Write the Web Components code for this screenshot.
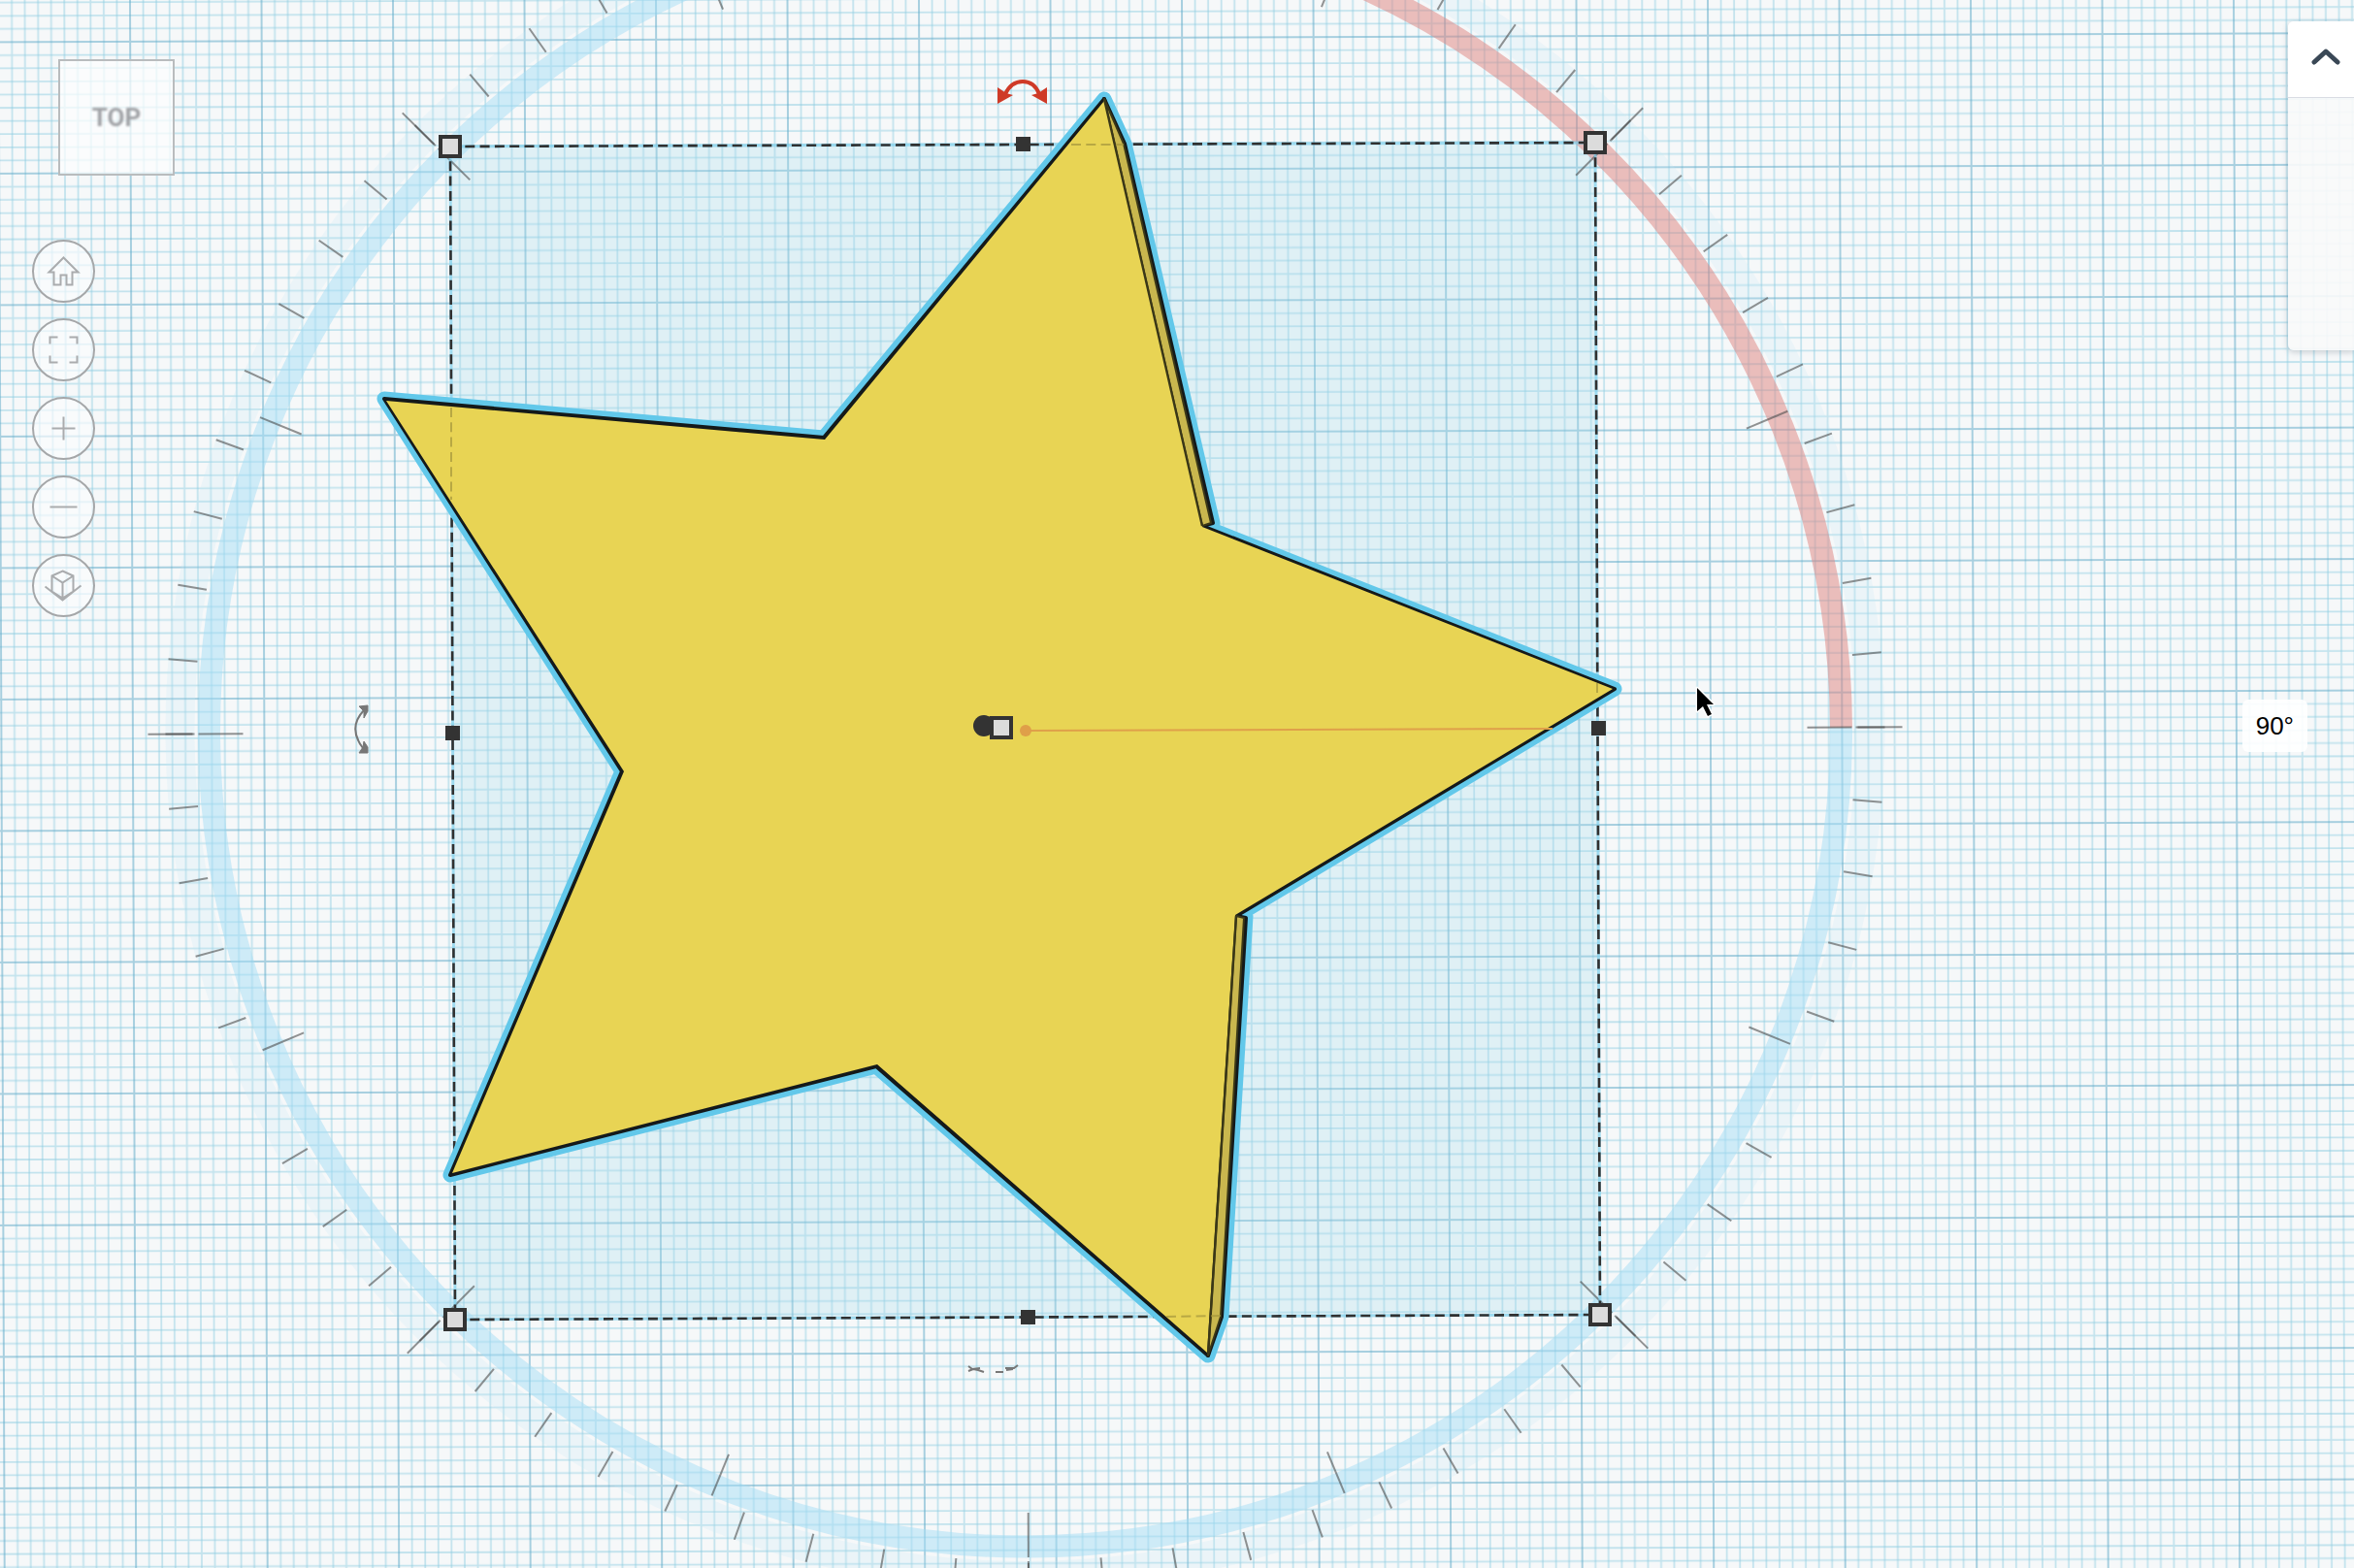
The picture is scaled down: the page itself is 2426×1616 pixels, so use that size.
<!DOCTYPE html>
<html lang="en">
<head>
<meta charset="utf-8">
<title>Workplane</title>
<style>
  html, body {
    height: 100%;
    margin: 0;
  }
  body {
    overflow: hidden;
    font-family: "Liberation Sans", Arial, sans-serif;
  }
</style>
</head>
<body>
<editor-app></editor-app>

<template id="scene-template">
<style>
  :host {
    display: block;
    width: 100%;
    height: 100%;
  }
  svg {
    display: block;
    width: 100%;
    height: 100%;
  }
  .minor { stroke: #8fcde2; stroke-opacity: 0.5; stroke-width: 1.8; }
  .major { stroke: #66acc9; stroke-opacity: 0.55; stroke-width: 2; fill: none; }
  .ring { fill: none; stroke: #a6def6; stroke-opacity: 0.5; stroke-width: 23; }
  .ring.active { stroke: #de8682; stroke-opacity: 0.52; }
  .halo { fill: none; stroke: #c4e9f8; stroke-opacity: 0.22; stroke-width: 30; }
  .ticks line { stroke: #4c4c4c; stroke-opacity: 0.6; stroke-width: 2; }
  .area { fill: #a3d9ec; fill-opacity: 0.27; }
  .dash-glow { fill: none; stroke: #7fd0ec; stroke-opacity: 0.7; stroke-width: 3; }
  .dash { fill: none; stroke: #303030; stroke-width: 2.6; stroke-dasharray: 10 5.3; }
  .glow { fill: #62c8ea; stroke: #62c8ea; stroke-width: 15; stroke-linejoin: round; }
  .edge { stroke: #14191a; stroke-width: 4; stroke-linejoin: round; }
  .top { fill: #e8d454; }
  .side { fill: #c9b74e; stroke: #3a3717; stroke-width: 2; stroke-linejoin: round; }
  .hidden-dash { stroke: #a4963c; stroke-opacity: 0.7; stroke-width: 2; stroke-dasharray: 10 5.3; }
  .corner { fill: #dcdcdc; stroke: #333; stroke-width: 4; }
  .mid { fill: #333; }
</style>
<svg viewBox="0 0 2426 1616" preserveAspectRatio="xMidYMid slice" role="img" aria-label="Star on the workplane">
  <defs>
    <pattern id="grid" width="135.5" height="135.5" patternUnits="userSpaceOnUse" patternTransform="rotate(-0.22) translate(-1.5 43.4)">
      <g class="minor"></g>
      <path class="major" d="M0 0H135.5M0 135.5H135.5M0 0V135.5M135.5 0V135.5"/>
    </pattern>
  </defs>
  <rect width="2426" height="1616" fill="#f6f8f9"/>
  <rect width="2426" height="1616" fill="url(#grid)"/>

  <polygon class="area" points="464,151 1644,147 1649,1355 469,1360"/>

  <!-- rotation protractor -->
  <g transform="translate(1056.5 753) rotate(-0.23)">
    <circle class="halo" r="871"/>
    <path class="ring" d="M841 0A841 841 0 1 1 0 -841"/>
    <path class="ring active" d="M841 0A841 841 0 0 0 0 -841"/>
    <g class="ticks"></g>
  </g>

  <polygon class="dash-glow" points="464,151 1644,147 1649,1355 469,1360"/>
  <path class="dash" d="M464 151L1644 147M464 151L469 1360M469 1360L1649 1355M1644 147L1649 1355"/>

  <!-- star body -->
  <polygon class="glow" points="1664,710 1239,542 1250,539 1159,148 1138,102 849,451 396,411 641,795 464,1211 903,1099 1245,1397 1259,1357 1284,944 1274,944"/>
  <g class="edge">
    <polygon points="1138,102 1159,148 1250,539 1239,542"/>
    <polygon points="1274,944 1284,946 1259,1357 1245,1397"/>
    <polygon points="1664,710 1239,542 1138,102 849,451 396,411 641,795 464,1211 903,1099 1245,1397 1274,944"/>
  </g>
  <polygon class="side" points="1138,102 1158,148 1248,539 1239,542"/>
  <polygon class="side" points="1274,944 1282,946 1258,1357 1245,1397"/>
  <polygon class="top" points="1662,710 1239,543 1138,104 850,453 398,413 643,795 466,1209 904,1097 1244,1394 1273,943"/>
  <path d="M1138 102L1239 542M1274 944L1245 1397" stroke="#3a3717" stroke-width="2.4"/>
  <path class="hidden-dash" d="M1104 149L1158 149M465 420L465 515M1202 1357L1258 1356M1646 704L1646 718"/>

  <path d="M1057 753L1600 751" stroke="#dfa04a" stroke-width="2"/>
  <circle cx="1057" cy="753" r="6" fill="#df9f49"/>
  <circle cx="1014" cy="748" r="11" fill="#333"/>
  <rect class="corner" x="1022" y="740" width="20" height="20"/>

  <g class="handles"></g>

  <!-- rotate arrows: facing, side-on, edge-on -->
  <path d="M1036 97Q1042 84 1054 84T1071 97" fill="none" stroke="#cf3a27" stroke-width="4"/>
  <path d="M1028 90L1034 94L1037 96L1044 98L1028 107ZM1079 90L1073 94L1070 96L1063 98L1079 107Z" fill="#cf3a27"/>
  <path d="M375 732Q358 750 374 771" fill="none" stroke="#777" stroke-width="2"/>
  <path d="M379 727L370 728L375 733L375 740L379 733ZM379 776L370 776L374 770L375 764L379 770Z" fill="#777" stroke="#777"/>
  <path d="M998 1408L1002 1411L1010 1410M998 1413L1003 1411L1008 1412L1014 1414M1026 1414L1034 1414M1036 1410L1045 1410L1049 1407M1037 1412L1044 1411" fill="none" stroke="#777" stroke-width="2"/>

  <path d="M1749 709V733L1755 728L1760 738L1764 736L1759 726H1766Z" fill="#000" stroke="#fff" stroke-width="3" stroke-linejoin="round" paint-order="stroke"/>
</svg>
</template>

<template id="cube-template">
<style>
  :host { display: block; }
  button {
    display: block;
    box-sizing: border-box;
    width: 120px;
    height: 120px;
    padding: 0;
    border: 2px solid #b9bcbe;
    background: rgba(252, 253, 254, 0.72);
    color: #a0a2a6;
    font: bold 26px Roboto, "Liberation Sans", sans-serif;
  }
  span { filter: blur(1px); }
</style>
<button type="button"><span><slot></slot></span></button>
</template>

<template id="nav-template">
<style>
  :host { display: block; }
  button {
    display: block;
    box-sizing: border-box;
    width: 65px;
    height: 65px;
    padding: 0;
    border: 2px solid #a5a7a9;
    border-radius: 50%;
    background: rgba(250, 252, 253, 0.65);
  }
  svg {
    display: block;
    width: 61px;
    height: 61px;
    fill: none;
    stroke: #aaacae;
    stroke-width: 2;
  }
</style>
<button type="button"><svg viewBox="-30.5 -30.5 61 61" aria-hidden="true"><path/></svg></button>
</template>

<template id="panel-template">
<style>
  :host {
    display: block;
    box-sizing: border-box;
    width: 68px;
    border-radius: 6px 0 0 6px;
    overflow: hidden;
    background: rgba(249, 249, 250, 0.9);
    box-shadow: 0 2px 6px rgba(60, 80, 100, 0.25);
  }
  button {
    display: flex;
    align-items: center;
    justify-content: flex-start;
    box-sizing: border-box;
    width: 100%;
    height: 79px;
    padding: 0 0 6px 24px;
    border: 0;
    border-bottom: 1px solid #d9dce3;
    background: #fff;
  }
  .body { height: 260px; }
</style>
<button type="button" aria-label="Collapse panel">
  <svg width="30" height="20" viewBox="0 0 30 20" fill="none" stroke="#3a4856" stroke-width="5" stroke-linecap="round" stroke-linejoin="round"><path d="M3 16L15 5L27 16"/></svg>
</button>
<div class="body"><slot></slot></div>
</template>

<template id="angle-template">
<style>
  :host { display: block; }
  output {
    display: block;
    padding: 12px 14px;
    border-radius: 6px;
    background: rgba(255, 255, 255, 0.9);
    color: #000;
    font-size: 26px;
    line-height: 30px;
  }
</style>
<output><slot></slot></output>
</template>

<template id="app-template">
<style>
  :host {
    display: grid;
    grid-template: 100% / 100%;
    height: 100%;
    overflow: hidden;
  }
  main-scene, .chrome { grid-area: 1 / 1; }
  .chrome {
    display: flex;
    justify-content: space-between;
    align-items: flex-start;
    position: relative;
  }
  nav {
    display: flex;
    flex-direction: column;
    gap: 16px;
    padding: 61px 0 0 33px;
  }
  view-cube { padding: 0 0 50px 27px; }
  side-panel { margin-top: 22px; }
  /* floats over the scene, beside the protractor */
  angle-label {
    position: absolute;
    top: 721px;
    right: 48px;
  }
</style>
<main-scene></main-scene>
<div class="chrome">
  <nav aria-label="View controls">
    <view-cube>TOP</view-cube>
    <nav-button icon="home" label="Home view"></nav-button>
    <nav-button icon="fit" label="Fit all in view"></nav-button>
    <nav-button icon="plus" label="Zoom in"></nav-button>
    <nav-button icon="minus" label="Zoom out"></nav-button>
    <nav-button icon="cube" label="Switch projection"></nav-button>
  </nav>
  <side-panel></side-panel>
  <angle-label>90°</angle-label>
</div>
</template>

<script>
const SVG_NS = "http://www.w3.org/2000/svg"

const ICONS = {
  home: "M0 -14L15 1H9V14H3V4H-3V14H-10V1H-15Z",
  fit: "M-14 -6V-13H-6M6 -13H14V-6M14 6V13H6M-6 13H-14V6",
  plus: "M-12 0H12M0 -12V12",
  minus: "M-14 0H14",
  cube: "M-1 -15L10 -10V6L-1 13L-12 6V-10ZM-12 -10L-1 -3L10 -10M-1 -3V13M-19 1L-1 15L18 0"
}

class BaseElement extends HTMLElement {
  constructor(templateId) {
    super()
    this.attachShadow({ mode: "open" })
    this.shadowRoot.appendChild(document.getElementById(templateId).content.cloneNode(true))
  }
}

class MainScene extends BaseElement {
  constructor() {
    super("scene-template")
    this.drawGrid()
    this.drawTicks()
    this.drawHandles()
  }

  add(parent, name, attrs) {
    const node = document.createElementNS(SVG_NS, name)
    for (const key in attrs) {
      node.setAttribute(key, attrs[key])
    }
    parent.appendChild(node)
  }

  drawGrid() {
    const minor = this.shadowRoot.querySelector(".minor")
    for (let i = 1; i < 10; i++) {
      const p = i * 13.55
      this.add(minor, "path", { d: `M${p} 0V135.5M0 ${p}H135.5` })
    }
  }

  drawTicks() {
    const ticks = this.shadowRoot.querySelector(".ticks")
    const tick = (angle, from, to) => {
      this.add(ticks, "line", { x1: from, x2: to, transform: `rotate(${angle})` })
    }
    for (let a = 0; a < 360; a += 5) {
      // the scale has no mark at these two
      if (a !== 25 && a !== 155) {
        tick(a, 856, 886)
      }
    }
    for (let a = 0; a < 360; a += 22.5) {
      tick(a, 806, 852)
    }
    for (let a = 0; a < 360; a += 45) {
      tick(a, 858, 904)
    }
  }

  drawHandles() {
    const handles = this.shadowRoot.querySelector(".handles")
    const corners = [[464, 151], [1644, 147], [1649, 1355], [469, 1360]]
    const mids = [[1054, 149], [466, 756], [1647, 751], [1059, 1358]]
    corners.forEach(([x, y]) => {
      this.add(handles, "rect", { class: "corner", x: x - 10, y: y - 10, width: 20, height: 20 })
    })
    mids.forEach(([x, y]) => {
      this.add(handles, "rect", { class: "mid", x: x - 7, y: y - 8, width: 15, height: 15 })
    })
  }
}

class ViewCube extends BaseElement {
  constructor() {
    super("cube-template")
  }
}

class NavButton extends BaseElement {
  constructor() {
    super("nav-template")
    this.$button = this.shadowRoot.querySelector("button")
    this.$path = this.shadowRoot.querySelector("path")
  }

  static get observedAttributes() {
    return ["icon", "label"]
  }

  attributeChangedCallback(name, oldValue, newValue) {
    switch (name) {
      case "icon":
        this.$path.setAttribute("d", ICONS[newValue])
        break;
      case "label":
        this.$button.setAttribute("aria-label", newValue)
        break;
      default:
        break;
    }
  }
}

class SidePanel extends BaseElement {
  constructor() {
    super("panel-template")
  }
}

class AngleLabel extends BaseElement {
  constructor() {
    super("angle-template")
  }
}

class EditorApp extends BaseElement {
  constructor() {
    super("app-template")
  }
}

customElements.define("main-scene", MainScene)
customElements.define("view-cube", ViewCube)
customElements.define("nav-button", NavButton)
customElements.define("side-panel", SidePanel)
customElements.define("angle-label", AngleLabel)
customElements.define("editor-app", EditorApp)
</script>
</body>
</html>
